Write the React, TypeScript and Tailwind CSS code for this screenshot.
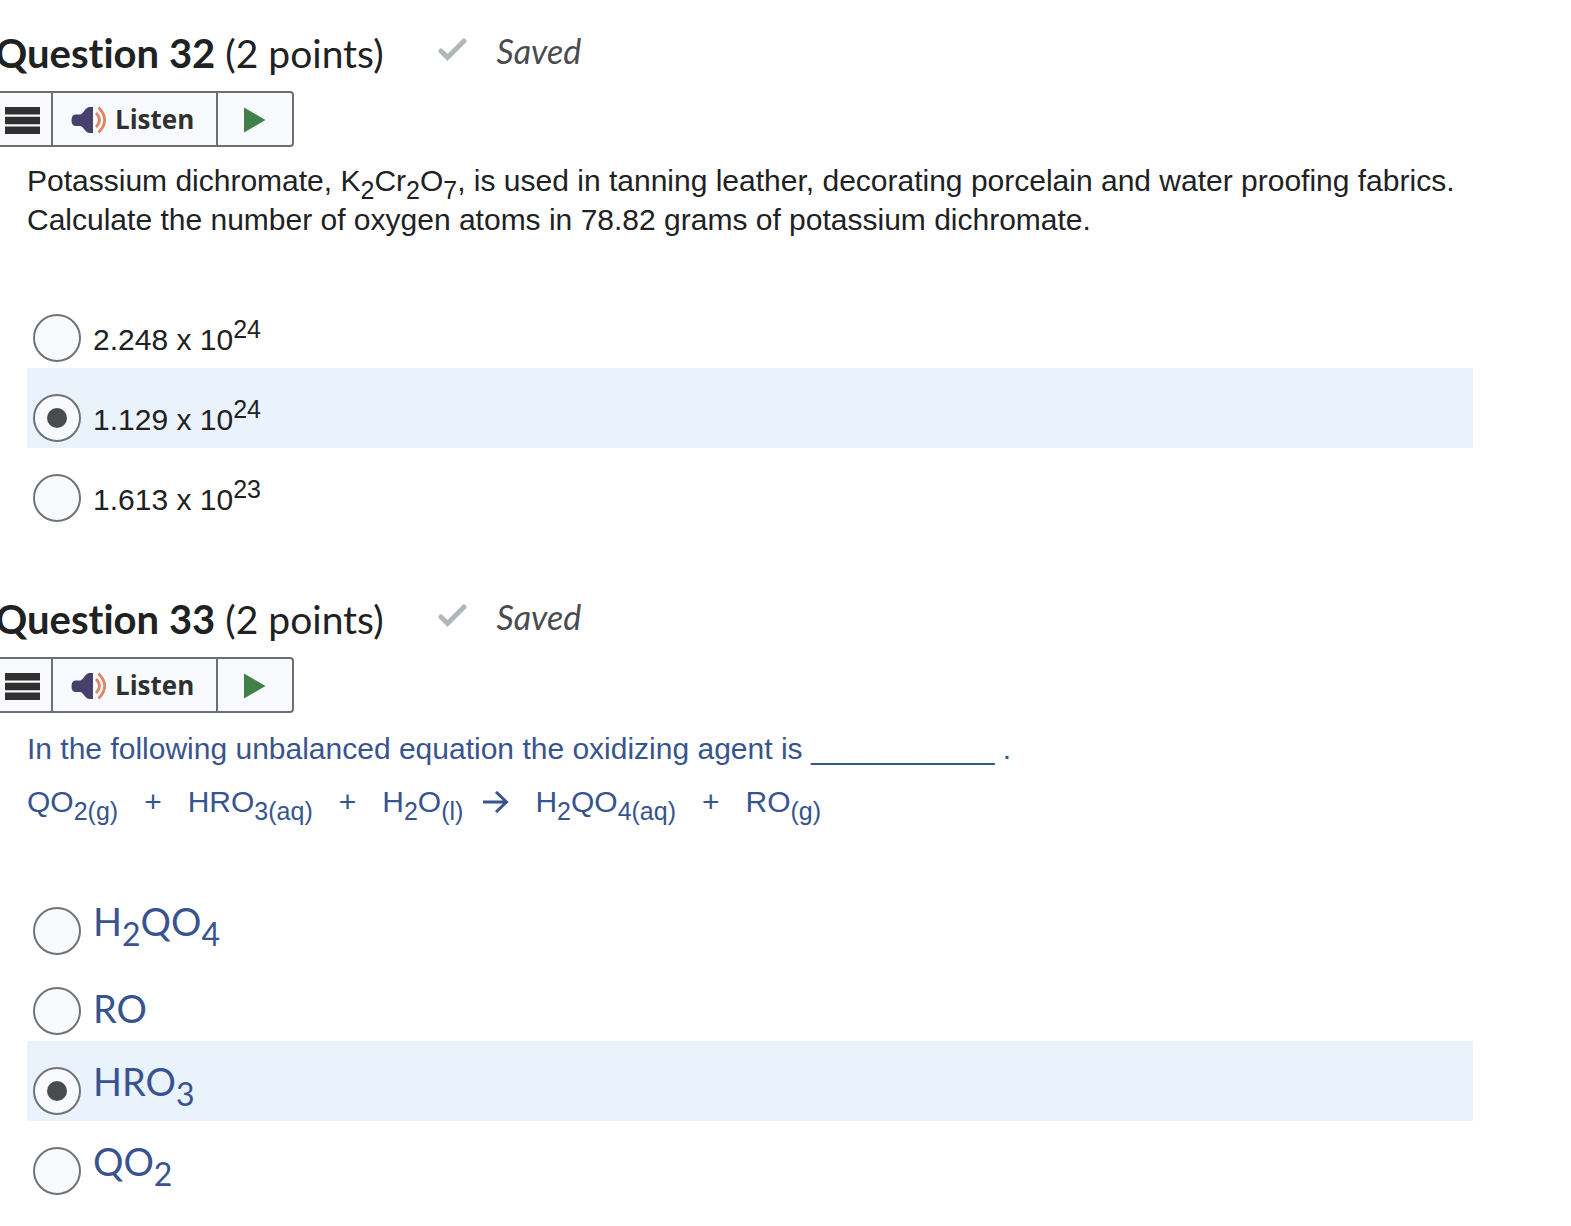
import { useState } from "react";
import type { ReactNode } from "react";

type Option = { id: string; label: ReactNode };

type QuestionProps = {
  number: number;
  points: number;
  options: Option[];
  initial: string;
  optionClass: string;
  children: ReactNode;
};

function Sub({ children }: { children: ReactNode }) {
  return <sub className="text-[25px] bottom-0 relative top-[8px] align-baseline leading-none">{children}</sub>;
}

function Sup({ children }: { children: ReactNode }) {
  return <sup className="text-[25px] relative top-[-12px] align-baseline leading-none">{children}</sup>;
}

function LargeSub({ children }: { children: ReactNode }) {
  return <sub className="text-[32px] bottom-0 relative top-[10px] align-baseline leading-none">{children}</sub>;
}

function SpeakerIcon() {
  return (
    <svg width="36" height="28" viewBox="0 0 36 28" aria-hidden="true">
      <path d="M5 8.500h4C12 8.500 14.500 1 18.500 1H22v26h-3.500C14.500 27 12 20 9 20H5Q.5 20 .5 14.200T5 8.500z" fill="#45416a" />
      <path d="M25 7q7 7 0 14" fill="none" stroke="#e28562" strokeWidth="2.800" />
      <path d="M27.500 1.500q12.500 12.500 0 25" fill="none" stroke="#e28562" strokeWidth="2.800" />
    </svg>
  );
}

function ListenToolbar() {
  return (
    <div className="flex h-14 w-fit rounded-[4px] border-2 border-[#6b7073] bg-[#f9fafe]">
      <button type="button" aria-label="Menu" className="flex w-[56px] items-center justify-end border-r-2 border-[#6b7073] pr-[11px] pt-[2px]">
        <svg width="35" height="27" viewBox="0 0 35 27" fill="#303030" aria-hidden="true">
          <path d="M0 0h35v7.500H0zM0 9.700h35v7.500H0zM0 19.500h35V27H0z" />
        </svg>
      </button>
      <button
        type="button"
        className="flex w-[165px] items-center gap-2 border-r-2 border-[#6b7073] pl-[18px] pt-px font-['Open_Sans',sans-serif] text-[26px] font-bold text-[#303030]"
      >
        <SpeakerIcon />
        Listen
      </button>
      <button type="button" aria-label="Play" className="flex w-[74px] items-center justify-center pt-[2px]">
        <svg width="22" height="26" viewBox="0 0 22 26" aria-hidden="true">
          <path d="M0 .5 21.500 13 0 25.500z" fill="#418048" />
        </svg>
      </button>
    </div>
  );
}

function Question({ number, points, options, initial, optionClass, children }: QuestionProps) {
  const [selected, setSelected] = useState(initial);

  return (
    <section>
      <div className="flex h-12 items-center font-[Lato,sans-serif]">
        <h2 className="text-[39px] text-[#202122] [font-variant-ligatures:none]">
          <strong className="text-[40px] font-bold">Question {number}</strong> ({points} points)
        </h2>
        <svg className="mb-[6px] ml-[54px]" width="30" height="24" viewBox="0 0 30 24" aria-hidden="true">
          <path d="M3 13 9.500 19.500 26 3" fill="none" stroke="#b1b8bb" strokeWidth="5" strokeLinecap="round" strokeLinejoin="miter" />
        </svg>
        <span className="mb-[6px] ml-[29px] text-[34px] italic text-[#494c4e]">Saved</span>
      </div>
      <div className="mt-[14px]">
        <ListenToolbar />
      </div>
      <div className="ml-8 mr-[98px]">
        {children}
        <div role="radiogroup" aria-label={`Question ${number}`}>
          {options.map((o) => (
            <label
              key={o.id}
              className={`flex h-20 items-end gap-3 pb-[6px] pl-[6px] ${optionClass} ${selected === o.id ? "bg-[#eaf2fc]" : ""}`}
            >
              <input
                type="radio"
                name={`question-${number}`}
                checked={selected === o.id}
                onChange={() => setSelected(o.id)}
                className="grid size-12 shrink-0 appearance-none place-items-center rounded-full border-2 border-[#6e7376] bg-[#f9fafe] before:hidden before:size-5 before:rounded-full before:bg-[#494c4e] checked:before:block"
              />
              {o.label}
            </label>
          ))}
        </div>
      </div>
    </section>
  );
}

const massOptions: Option[] = [
  { id: "a", label: <span>2.248 x 10<Sup>24</Sup></span> },
  { id: "b", label: <span>1.129 x 10<Sup>24</Sup></span> },
  { id: "c", label: <span>1.613 x 10<Sup>23</Sup></span> },
];

const agentOptions: Option[] = [
  { id: "h2qo4", label: <span className="pb-[9px]">H<LargeSub>2</LargeSub>QO<LargeSub>4</LargeSub></span> },
  { id: "ro", label: <span className="pb-[2px]">RO</span> },
  { id: "hro3", label: <span className="pb-[9px]">HRO<LargeSub>3</LargeSub></span> },
  { id: "qo2", label: <span className="pb-[9px]">QO<LargeSub>2</LargeSub></span> },
];

export default function App() {
  return (
    <div className="min-h-screen overflow-hidden bg-white pb-6">
      <main className="-ml-[5px] flex flex-col gap-[67px] pt-[29px]">
        <Question
          number={32}
          points={2}
          options={massOptions}
          initial="b"
          optionClass="font-['Liberation_Sans',sans-serif] text-[30px] leading-[44px] text-[#202122]"
        >
          <p className="mb-[49px] mt-[14px] font-['Liberation_Sans',sans-serif] text-[30px] leading-[39px] text-[#202122]">
            Potassium dichromate, K<Sub>2</Sub>Cr<Sub>2</Sub>O<Sub>7</Sub>, is used in tanning leather, decorating
            porcelain and water proofing fabrics. Calculate the number of oxygen atoms in 78.82 grams of potassium
            dichromate.
          </p>
        </Question>
        <Question
          number={33}
          points={2}
          options={agentOptions}
          initial="hro3"
          optionClass="font-[Lato,sans-serif] text-[38px] leading-[50px] text-[#38548e]"
        >
          <div className="mb-[58px] mt-[15px] font-['Liberation_Sans',sans-serif] text-[30px] text-[#38548e]">
            <p className="leading-[42px]">In the following unbalanced equation the oxidizing agent is ___________ .</p>
            <p className="mt-[11px] flex leading-[42px]">
              <span>QO<Sub>2(g)</Sub></span>
              <span className="mx-[26px]">+</span>
              <span>HRO<Sub>3(aq)</Sub></span>
              <span className="mx-[26px]">+</span>
              <span>H<Sub>2</Sub>O<Sub>(l)</Sub></span>
              <svg className="ml-5 mr-[26px] mt-[10px]" width="26" height="22" viewBox="0 0 26 22" role="img" aria-label="yields">
                <path d="M0 11h23M13 1 23.500 11 13 21" fill="none" stroke="currentColor" strokeWidth="3" />
              </svg>
              <span>H<Sub>2</Sub>QO<Sub>4(aq)</Sub></span>
              <span className="mx-[26px]">+</span>
              <span>RO<Sub>(g)</Sub></span>
            </p>
          </div>
        </Question>
      </main>
    </div>
  );
}
